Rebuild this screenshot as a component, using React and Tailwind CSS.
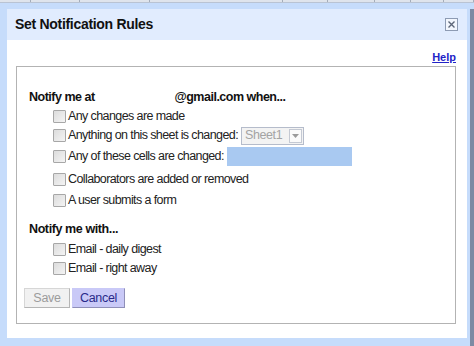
import React from 'react';

function Box() {
  return (
    <span className="w-[13px] h-[13px] shrink-0 border border-[#a7a7a7] bg-gradient-to-br from-[#dcdcdc] to-[#f4f4f4] rounded-[1px]" />
  );
}

function Option({ label, h = 'h-[19px]', children }) {
  return (
    <div className={`flex items-center ${h} pl-[36px]`}>
      <Box />
      <span className="ml-[2px] text-[12.5px] tracking-[-0.6px] text-[#222]">{label}</span>
      {children}
    </div>
  );
}

export default function App() {
  return (
    <div
      className="w-[474px] h-[346px] overflow-hidden bg-[#c6dcfb] flex flex-col"
      style={{ fontFamily: '"Liberation Sans", Arial, sans-serif' }}
    >
      {/* spreadsheet peeking above */}
      <div className="h-[3px] flex bg-[#dfe4ec] border-b border-[#b9c3d3]">
        {[40, 62, 90, 170, 57, 60, 46, 42, 38].map((w, i) => (
          <div key={i} className="h-full border-r border-[#a4adba]" style={{ width: w }} />
        ))}
      </div>
      <div className="flex flex-1 pt-[6px]">
        <div className="w-[7px]" />
        <div className="w-[460px] h-[329px] flex flex-col bg-white">
          <div className="h-[31px] bg-[#e1ecfe] flex items-center justify-between pl-[8px] pr-[9px]">
            <span className="text-[14px] tracking-[-0.3px] font-bold text-[#111]">Set Notification Rules</span>
            <span className="w-[13px] h-[13px] border border-[#8d9bb3] bg-[#f2f6fd] flex items-center justify-center">
              <svg width="9" height="9" viewBox="0 0 9 9">
                <path d="M1.5 1.5L7.5 7.5M7.5 1.5L1.5 7.5" stroke="#5c6678" strokeWidth="1.4" />
              </svg>
            </span>
          </div>
          <div className="flex justify-end pr-[11px] pt-[10px] h-[26px]">
            <span className="text-[11px] font-bold text-[#2323c7] underline leading-[14px]">Help</span>
          </div>
          <div className="ml-[9px] mr-[11px] h-[258px] border border-[#b3b3b3] flex flex-col pt-[20px]">
            <div className="h-[20px] flex items-center pl-[12px] text-[12.5px] tracking-[-0.5px] font-bold text-[#111]">
              <span>Notify me at</span>
              <span className="w-[80px]" />
              <span>@gmail.com when...</span>
            </div>
            <Option label="Any changes are made" />
            <Option label="Anything on this sheet is changed:">
              <span className="ml-[3px] w-[63px] h-[18px] border border-[#b5bccb] bg-[#f3f3f3] flex items-center">
                <span className="flex-1 pl-[3px] text-[12.5px] tracking-[-0.4px] text-[#a3a3a3]">Sheet1</span>
                <span className="w-[13px] h-[14px] mr-[1px] border border-[#c4c9d3] bg-[#fafafa] flex items-center justify-center">
                  <svg width="7" height="4" viewBox="0 0 7 4">
                    <path d="M0 0H7L3.5 4Z" fill="#9a9a9a" />
                  </svg>
                </span>
              </span>
            </Option>
            <Option label="Any of these cells are changed:" h="h-[23px]">
              <span className="ml-[3px] w-[125px] h-[19px] bg-[#a9c9f1]" />
            </Option>
            <Option label="Collaborators are added or removed" h="h-[23px]" />
            <Option label="A user submits a form" />
            <div className="h-[20px] mt-[9px] flex items-center pl-[12px] text-[12.5px] tracking-[-0.4px] font-bold text-[#111]">
              Notify me with...
            </div>
            <Option label="Email - daily digest" h="h-[20px]" />
            <Option label="Email - right away" />
            <div className="flex mt-[10px] pl-[7px] gap-[2px]">
              <span className="w-[46px] h-[20px] flex items-center justify-center text-[12.5px] tracking-[-0.3px] text-[#9c9c9c] bg-[#f1f1f1] border border-[#d6d6d6] border-r-[#b5b5b5] border-b-[#b5b5b5]">
                Save
              </span>
              <span className="w-[53px] h-[20px] flex items-center justify-center text-[12.5px] tracking-[-0.3px] text-[#29298a] bg-[#c9c9f7] border border-[#c9c9f7] border-r-[#8f8fb8] border-b-[#8f8fb8]">
                Cancel
              </span>
            </div>
          </div>
        </div>
        <div className="w-[3px]" />
        <div className="w-[4px] bg-[#7e8aa3]" />
      </div>
    </div>
  );
}
